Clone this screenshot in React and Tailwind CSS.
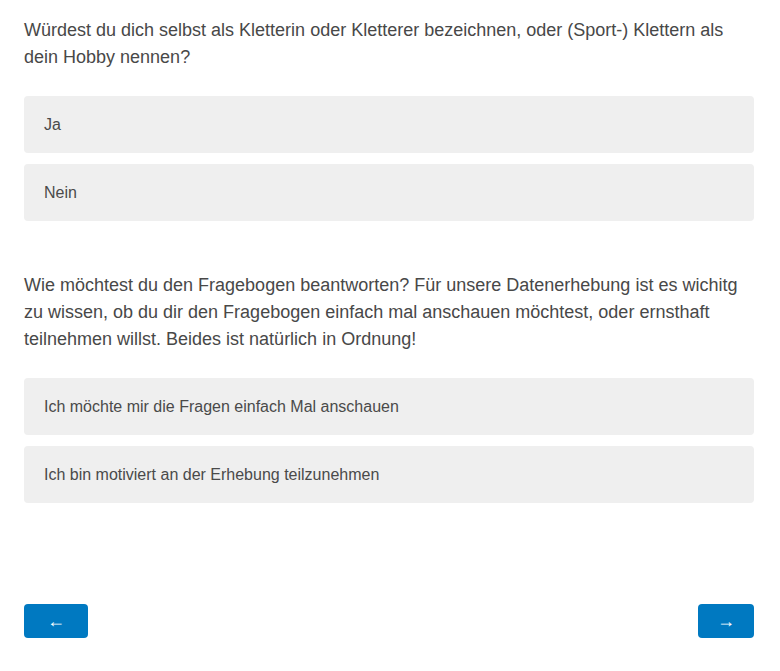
import React, { useState } from "react";

const questions = [
  {
    text: "Würdest du dich selbst als Kletterin oder Kletterer bezeichnen, oder (Sport-) Klettern als dein Hobby nennen?",
    options: ["Ja", "Nein"],
  },
  {
    text: "Wie möchtest du den Fragebogen beantworten? Für unsere Datenerhebung ist es wichitg zu wissen, ob du dir den Fragebogen einfach mal anschauen möchtest, oder ernsthaft teilnehmen willst. Beides ist natürlich in Ordnung!",
    options: [
      "Ich möchte mir die Fragen einfach Mal anschauen",
      "Ich bin motiviert an der Erhebung teilzunehmen",
    ],
  },
];

const App = () => {
  const [answers, setAnswers] = useState({});

  return (
    <div
      className="w-[780px] h-[671px] bg-white pl-6 pr-[26px] pt-[17px] flex flex-col text-[#484848]"
      style={{ fontFamily: '"Liberation Sans", Arial, sans-serif' }}
    >
      <div className="flex flex-col gap-[51px]">
        {questions.map((q, qi) => (
          <div key={qi}>
            <p className="text-[18px] leading-[27px] mb-[25px]">{q.text}</p>
            <div className="flex flex-col gap-[11px]">
              {q.options.map((opt) => (
                <button
                  key={opt}
                  onClick={() => setAnswers({ ...answers, [qi]: opt })}
                  className="h-[57px] w-full text-left px-5 rounded-[4px] bg-[#efefef] text-[16px] text-[#4a4a4a]"
                >
                  {opt}
                </button>
              ))}
            </div>
          </div>
        ))}
      </div>

      {/* nav */}
      <div className="mt-auto mb-[33px] flex justify-between">
        <button className="w-16 h-[34px] rounded-[4px] bg-[#0079c1] text-white text-[18px] leading-none">
          ←
        </button>
        <button className="w-14 h-[34px] rounded-[4px] bg-[#0079c1] text-white text-[18px] leading-none">
          →
        </button>
      </div>
    </div>
  );
};

export default App;
